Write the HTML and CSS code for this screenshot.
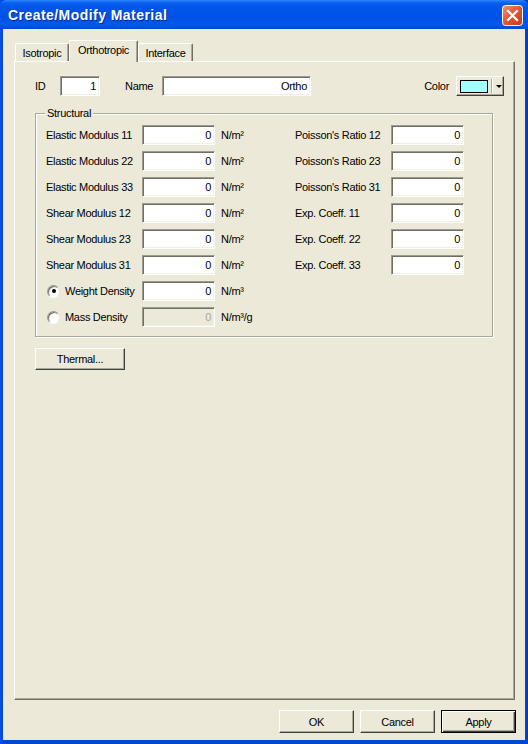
FILE: index.html
```html
<!DOCTYPE html>
<html>
<head>
<meta charset="utf-8">
<title>Create/Modify Material</title>
<link rel="stylesheet" href="styles.css">
</head>
<body>
<div class="window">
  <div class="titlebar">
    <span class="title">Create/Modify Material</span>
    <span class="close">
      <svg width="21" height="21" viewBox="0 0 21 21">
        <defs>
          <linearGradient id="cg" x1="0" y1="0" x2="1" y2="1">
            <stop offset="0" stop-color="#f0937a"/>
            <stop offset="0.5" stop-color="#e0552f"/>
            <stop offset="1" stop-color="#c7391b"/>
          </linearGradient>
        </defs>
        <rect x="0.5" y="0.5" width="20" height="20" rx="3" ry="3" fill="url(#cg)" stroke="#ffffff" stroke-width="1"/>
        <path d="M6 6 L15 15 M15 6 L6 15" stroke="#ffffff" stroke-width="2.2" stroke-linecap="square"/>
      </svg>
    </span>
  </div>
  <div class="client">
    <div class="tabs">
      <div class="tab tab-iso">Isotropic</div>
      <div class="tab tab-ortho selected">Orthotropic</div>
      <div class="tab tab-inter">Interface</div>
    </div>
    <div class="panel">
      <div class="idrow">
        <span class="lbl-id">ID</span>
        <span class="field f-id">1</span>
        <span class="lbl-name">Name</span>
        <span class="field f-name">Ortho</span>
        <span class="spacer"></span>
        <span class="lbl-color">Color</span>
        <span class="colorbtn">
          <span class="swatch"></span>
          <span class="sep"></span>
          <span class="arrow"></span>
        </span>
      </div>
      <div class="group">
        <div class="legend">Structural</div>
        <div class="grid">
          <span class="lbl">Elastic Modulus 11</span><span class="field">0</span><span class="unit">N/m²</span>
          <span class="lbl">Poisson's Ratio 12</span><span class="field">0</span>

          <span class="lbl">Elastic Modulus 22</span><span class="field">0</span><span class="unit">N/m²</span>
          <span class="lbl">Poisson's Ratio 23</span><span class="field">0</span>

          <span class="lbl">Elastic Modulus 33</span><span class="field">0</span><span class="unit">N/m²</span>
          <span class="lbl">Poisson's Ratio 31</span><span class="field">0</span>

          <span class="lbl">Shear Modulus 12</span><span class="field">0</span><span class="unit">N/m²</span>
          <span class="lbl">Exp. Coeff. 11</span><span class="field">0</span>

          <span class="lbl">Shear Modulus 23</span><span class="field">0</span><span class="unit">N/m²</span>
          <span class="lbl">Exp. Coeff. 22</span><span class="field">0</span>

          <span class="lbl">Shear Modulus 31</span><span class="field">0</span><span class="unit">N/m²</span>
          <span class="lbl">Exp. Coeff. 33</span><span class="field">0</span>

          <span class="lbl radio-lbl"><span class="radio checked"></span>Weight Density</span><span class="field">0</span><span class="unit">N/m³</span>
          <span class="empty"></span><span class="empty"></span>

          <span class="lbl radio-lbl"><span class="radio"></span>Mass Density</span><span class="field disabled">0</span><span class="unit">N/m³/g</span>
          <span class="empty"></span><span class="empty"></span>
        </div>
      </div>
      <div class="btn thermal">Thermal...</div>
    </div>
    <div class="buttons">
      <div class="btn">OK</div>
      <div class="btn">Cancel</div>
      <div class="btn default">Apply</div>
    </div>
  </div>
</div>
</body>
</html>
```
FILE: styles.css
```css
html, body {
  margin: 0;
  padding: 0;
  background: #ffffff;
}
body {
  font-family: "Liberation Sans", Arial, sans-serif;
  font-size: 11px;
  letter-spacing: -0.3px;
  color: #000000;
}
.window {
  width: 528px;
  height: 744px;
  display: flex;
  flex-direction: column;
  background: linear-gradient(to right, #0751e8 0px, #0047d6 3px, #0047d6 525px, #0038b8 528px);
  box-sizing: border-box;
}
.titlebar {
  height: 29px;
  flex: none;
  display: flex;
  align-items: center;
  justify-content: space-between;
  padding: 0 5px 0 8px;
  background: linear-gradient(to bottom, #2e86ff 0px, #0a5fef 3px, #0055e8 8px, #0052e4 18px, #0058ec 25px, #0047d0 29px);
  border-radius: 6px 6px 0 0;
}
.title {
  color: #ffffff;
  font-weight: bold;
  font-size: 14px;
  letter-spacing: 0.45px;
  text-shadow: 1px 1px 0 #0a2a8a;
  line-height: 16px;
  margin-top: 1px;
}
.close {
  display: flex;
  width: 21px;
  height: 21px;
  margin-top: 2px;
}
.client {
  flex: 1;
  margin: 0 3px 4px 3px;
  background: #ece9d8;
  display: flex;
  flex-direction: column;
  padding: 11px 10px 7px 11px;
  min-height: 0;
}
.tabs {
  display: flex;
  align-items: flex-end;
  height: 21px;
  margin-left: 1px;
  position: relative;
  z-index: 1;
}
.tab {
  height: 18px;
  box-sizing: border-box;
  border-top: 1px solid #ffffff;
  border-left: 1px solid #ffffff;
  border-right: 1px solid #716f64;
  box-shadow: inset -1px 0 0 #aca899;
  border-radius: 2px 2px 0 0;
  display: flex;
  align-items: center;
  justify-content: center;
  background: #ece9d8;
}
.tab-iso { width: 54px; }
.tab-ortho { width: 69px; }
.tab-inter { width: 55px; }
.tab.selected {
  height: 22px;
  margin-bottom: -1px;
  padding-bottom: 3px;
}
.panel {
  flex: 1;
  box-sizing: border-box;
  border-top: 1px solid #ffffff;
  border-left: 1px solid #ffffff;
  border-right: 1px solid #716f64;
  border-bottom: 1px solid #716f64;
  box-shadow: inset -1px -1px 0 #aca899;
  padding: 14px 8px 0 20px;
  display: flex;
  flex-direction: column;
  align-items: flex-start;
}
.idrow {
  display: flex;
  align-items: center;
  height: 20px;
  width: 469px;
}
.lbl-id { width: 25px; }
.lbl-name { width: 37px; margin-left: 25px; }
.spacer { flex: 1; }
.lbl-color { margin-right: 7px; }
.field {
  box-sizing: border-box;
  height: 20px;
  width: 73px;
  background: #ffffff;
  border-top: 1px solid #9d9a8f;
  border-left: 1px solid #9d9a8f;
  border-bottom: 1px solid #ffffff;
  border-right: 1px solid #ffffff;
  box-shadow: inset 1px 1px 0 #716f64, inset -1px -1px 0 #f1efe2;
  display: flex;
  align-items: center;
  justify-content: flex-end;
  padding-right: 3px;
  line-height: 13px;
}
.f-id { width: 40px; }
.f-name { width: 149px; }
.field.disabled {
  background: #ece9d8;
  color: #aca899;
}
.colorbtn {
  box-sizing: border-box;
  width: 48px;
  height: 20px;
  border-top: 1px solid #ffffff;
  border-left: 1px solid #ffffff;
  border-right: 1px solid #404040;
  border-bottom: 1px solid #404040;
  box-shadow: inset -1px -1px 0 #aca899;
  display: flex;
  align-items: center;
  padding-left: 3px;
}
.swatch {
  width: 28px;
  height: 13px;
  box-sizing: border-box;
  border: 1px solid #000000;
  background: #a4ffff;
}
.sep {
  width: 1px;
  height: 14px;
  background: #aca899;
  border-right: 1px solid #ffffff;
  margin-left: 3px;
}
.arrow {
  width: 0;
  height: 0;
  border-left: 3px solid transparent;
  border-right: 3px solid transparent;
  border-top: 3px solid #000000;
  margin-left: 3px;
}
.group {
  box-sizing: border-box;
  width: 458px;
  margin-top: 17px;
  border: 1px solid #aca899;
  box-shadow: 1px 1px 0 #ffffff, inset 1px 1px 0 #ffffff;
  padding: 0 0 9px 10px;
}
.legend {
  width: max-content;
  margin: -7px 0 0 -1px;
  padding: 0 2px;
  background: #ece9d8;
  line-height: 13px;
}
.grid {
  margin-top: 5px;
  display: grid;
  grid-template-columns: 96px 73px 80px 96px 73px;
  grid-auto-rows: 20px;
  row-gap: 6px;
  align-items: center;
}
.lbl {
  line-height: 13px;
}
.unit {
  padding-left: 6px;
}
.radio-lbl {
  display: flex;
  align-items: center;
  margin-left: 1px;
}
.radio {
  width: 13px;
  height: 13px;
  box-sizing: border-box;
  border-radius: 50%;
  border: 1px solid;
  border-color: #9d9a8f #e8e6dc #ffffff #9d9a8f;
  background: radial-gradient(circle at 60% 60%, #ffffff 0%, #ffffff 45%, #dcdad0 100%);
  box-shadow: inset 1px 1px 0 #716f64;
  margin-right: 5px;
  display: flex;
  align-items: center;
  justify-content: center;
}
.radio.checked::after {
  content: "";
  width: 4px;
  height: 4px;
  border-radius: 50%;
  background: #000000;
}
.btn {
  box-sizing: border-box;
  width: 75px;
  height: 23px;
  border-top: 1px solid #ffffff;
  border-left: 1px solid #ffffff;
  border-right: 1px solid #404040;
  border-bottom: 1px solid #404040;
  box-shadow: inset -1px -1px 0 #aca899;
  background: #ece9d8;
  display: flex;
  align-items: center;
  justify-content: center;
}
.thermal {
  width: 90px;
  height: 22px;
  margin-top: 11px;
}
.buttons {
  display: flex;
  justify-content: flex-end;
  gap: 6px;
  margin-top: 10px;
  margin-right: -1px;
}
.btn.default {
  border: 1px solid #000000;
  box-shadow: inset 1px 1px 0 #ffffff, inset -1px -1px 0 #404040, inset -2px -2px 0 #aca899;
}
```
